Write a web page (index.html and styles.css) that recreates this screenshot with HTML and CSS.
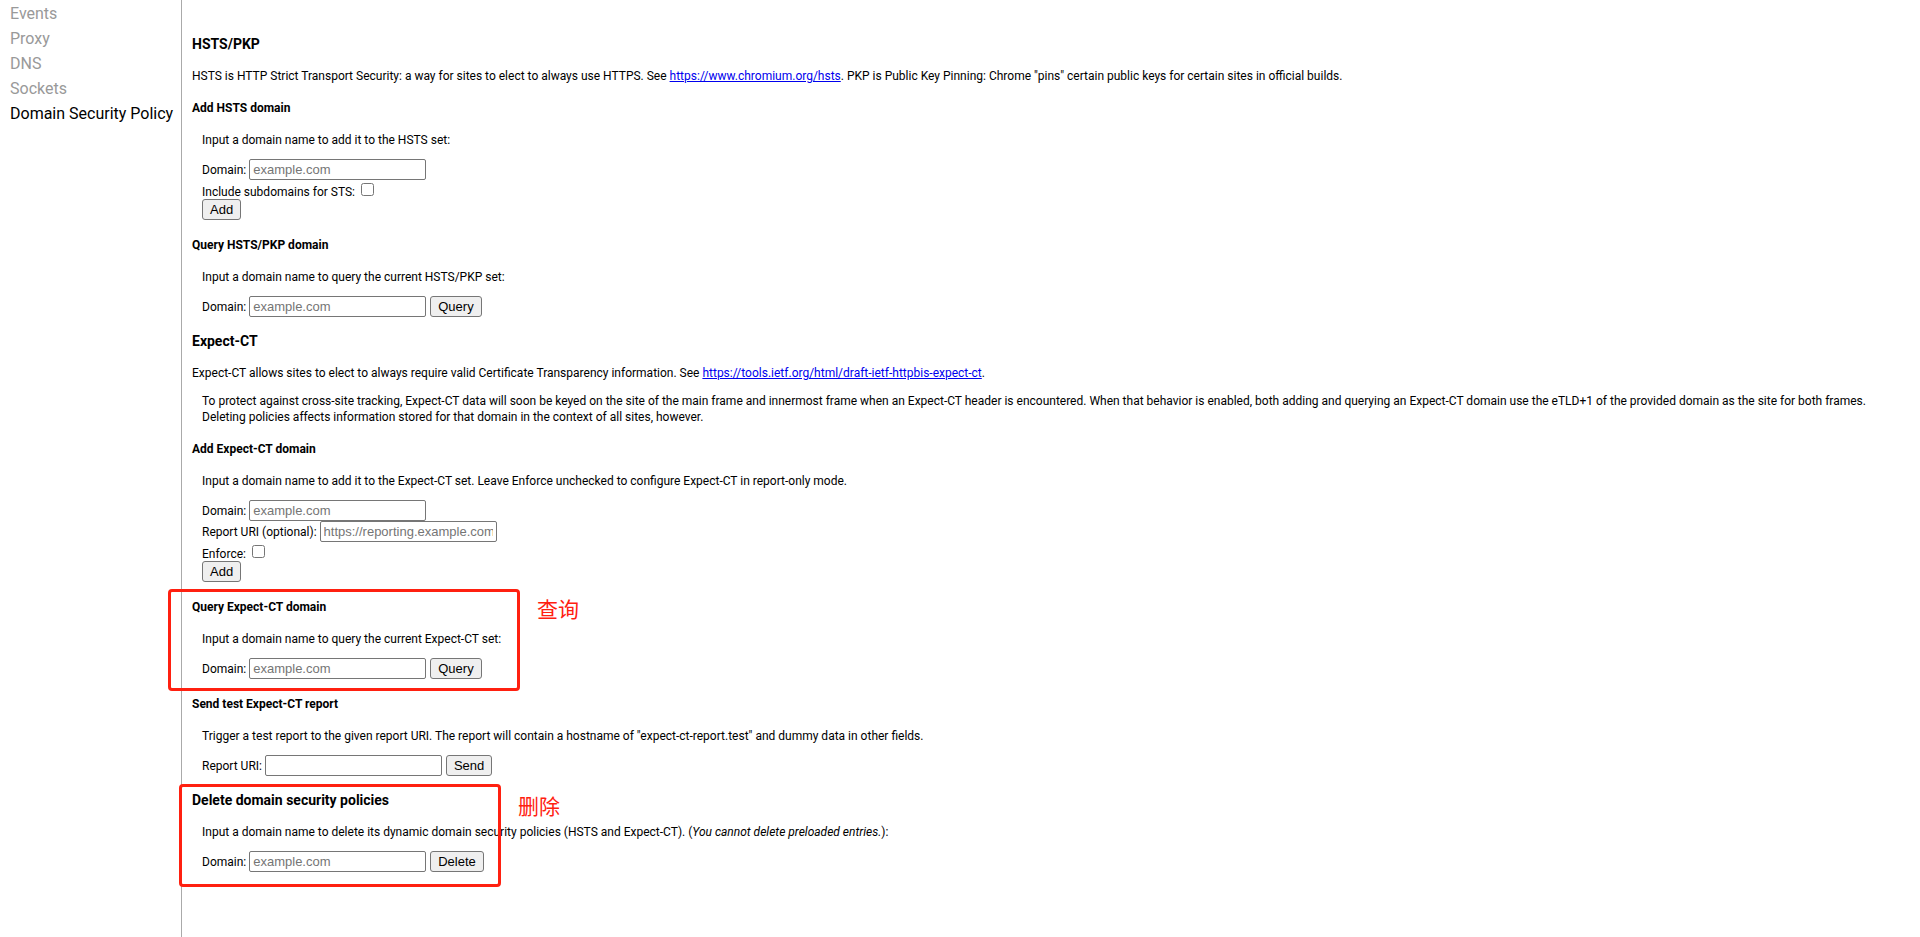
FILE: index.html
```html
<!DOCTYPE html>
<html lang="en">
<head>
    <meta charset="UTF-8">
    <meta name="viewport" content="width=device-width, initial-scale=1.0">
    <title>Domain Security Policy</title>
    <link rel="stylesheet" href="styles.css">
</head>
<body>

    <nav class="tabs">
        <a href="#events">Events</a>
        <a href="#proxy">Proxy</a>
        <a href="#dns">DNS</a>
        <a href="#sockets">Sockets</a>
        <a href="#hsts" class="selected">Domain Security Policy</a>
    </nav>

    <main class="content">
        <h3>HSTS/PKP</h3>
        <p>HSTS is HTTP Strict Transport Security: a way for sites to elect to always use HTTPS. See <a href="https://www.chromium.org/hsts">https://www.chromium.org/hsts</a>. PKP is Public Key Pinning: Chrome "pins" certain public keys for certain sites in official builds.</p>

        <section>
            <h4>Add HSTS domain</h4>
            <form>
                <p>Input a domain name to add it to the HSTS set:</p>
                <div class="row">
                    <label for="add-domain">Domain:</label>
                    <input type="text" id="add-domain" placeholder="example.com">
                </div>
                <div class="row check-row">
                    <label for="add-sub">Include subdomains for STS:</label>
                    <input type="checkbox" id="add-sub">
                </div>
                <div class="row">
                    <button type="submit">Add</button>
                </div>
            </form>
        </section>

        <section>
            <h4>Query HSTS/PKP domain</h4>
            <form>
                <p>Input a domain name to query the current HSTS/PKP set:</p>
                <div class="row">
                    <label for="query-domain">Domain:</label>
                    <input type="text" id="query-domain" placeholder="example.com">
                    <button type="submit">Query</button>
                </div>
            </form>
        </section>

        <h3>Expect-CT</h3>
        <p>Expect-CT allows sites to elect to always require valid Certificate Transparency information. See <a href="https://tools.ietf.org/html/draft-ietf-httpbis-expect-ct">https://tools.ietf.org/html/draft-ietf-httpbis-expect-ct</a>.</p>
        <p class="note">To protect against cross-site tracking, Expect-CT data will soon be keyed on the site of the main frame and innermost frame when an Expect-CT header is encountered. When that behavior is enabled, both adding and querying an Expect-CT domain use the eTLD+1 of the provided domain as the site for both frames. Deleting policies affects information stored for that domain in the context of all sites, however.</p>

        <section>
            <h4>Add Expect-CT domain</h4>
            <form>
                <p>Input a domain name to add it to the Expect-CT set. Leave Enforce unchecked to configure Expect-CT in report-only mode.</p>
                <div class="row">
                    <label for="ct-domain">Domain:</label>
                    <input type="text" id="ct-domain" placeholder="example.com">
                </div>
                <div class="row">
                    <label for="ct-report">Report URI (optional):</label>
                    <input type="text" id="ct-report" placeholder="https://reporting.example.com">
                </div>
                <div class="row check-row">
                    <label for="ct-enforce">Enforce:</label>
                    <input type="checkbox" id="ct-enforce">
                </div>
                <div class="row">
                    <button type="submit">Add</button>
                </div>
            </form>
        </section>

        <section class="marked">
            <h4>Query Expect-CT domain</h4>
            <form>
                <p>Input a domain name to query the current Expect-CT set:</p>
                <div class="row">
                    <label for="ct-query">Domain:</label>
                    <input type="text" id="ct-query" placeholder="example.com">
                    <button type="submit">Query</button>
                </div>
            </form>
            <div class="mark mark-query"><span class="mark-text" lang="zh">查询</span></div>
        </section>

        <section>
            <h4>Send test Expect-CT report</h4>
            <form>
                <p>Trigger a test report to the given report URI. The report will contain a hostname of "expect-ct-report.test" and dummy data in other fields.</p>
                <div class="row">
                    <label for="test-report">Report URI:</label>
                    <input type="text" id="test-report">
                    <button type="submit">Send</button>
                </div>
            </form>
        </section>

        <section class="marked">
            <h3>Delete domain security policies</h3>
            <form>
                <p>Input a domain name to delete its dynamic domain security policies (HSTS and Expect-CT). (<em>You cannot delete preloaded entries.</em>):</p>
                <div class="row">
                    <label for="delete-domain">Domain:</label>
                    <input type="text" id="delete-domain" placeholder="example.com">
                    <button type="submit">Delete</button>
                </div>
            </form>
            <div class="mark mark-delete"><span class="mark-text" lang="zh">删除</span></div>
        </section>
    </main>

</body>
</html>
```
FILE: styles.css
```css
* {
    box-sizing: border-box;
}

body {
    margin: 0;
    min-height: 100vh;
    display: flex;
    font-family: "Segoe UI", Roboto, sans-serif;
    font-size: 12px;
    line-height: 16px;
    color: #000;
    background-color: #fff;
}

/* Tab list on the left */
.tabs {
    flex: none;
    width: 182px;
    display: flex;
    flex-direction: column;
    padding: 1px 10px;
    border-right: 1px solid #aaa;
}

.tabs a {
    font-size: 16px;
    line-height: 25px;
    color: #999;
    text-decoration: none;
    white-space: nowrap;
}

.tabs a.selected {
    color: #000;
}

/* Policy page */
.content {
    flex: 1;
    min-width: 0;
    padding: 21px 10px;
}

h3 {
    font-size: 14px;
    line-height: 19px;
    margin: 14px 0;
}

h4 {
    font-size: 12px;
    margin: 16px 0;
}

p {
    margin: 12px 0;
}

.content a {
    color: #00e;
}

.note {
    margin-left: 10px;
}

form {
    padding: 0 0 1px 10px;
}

form p {
    margin: 0 0 11px;
}

.row {
    display: flex;
    align-items: center;
    gap: 3px;
}

.row button {
    margin-left: 1px;
}

.row button:first-child {
    margin-left: 0;
}

input,
button {
    font-family: Arial, "Liberation Sans", sans-serif;
    font-size: 13px;
    height: 21px;
    margin: 0;
}

input[type="text"] {
    width: 177px;
    padding: 1px 3px;
    border: 1px solid #767676;
    border-radius: 2px;
}

input::placeholder {
    color: #757575;
}

button {
    padding: 0 7px;
    color: #000;
    background-color: #efefef;
    border: 1px solid #767676;
    border-radius: 3px;
}

.check-row {
    height: 19px;
    gap: 6px;
    align-items: flex-start;
}

.check-row label {
    line-height: 24px;
}

.check-row input {
    width: 13px;
    height: 13px;
    margin-top: 3px;
}

/* Red frames drawn over the page */
.marked {
    position: relative;
}

.mark {
    position: absolute;
    border: 3px solid #ff2010;
    border-radius: 4px;
    pointer-events: none;
}

.mark-query {
    top: -10px;
    left: -24px;
    width: 352px;
    height: 102px;
}

.mark-delete {
    top: -7px;
    left: -13px;
    width: 322px;
    height: 103px;
}

.mark-text {
    position: absolute;
    top: 4px;
    left: 100%;
    margin-left: 20px;
    font-family: "Microsoft YaHei", "Noto Sans CJK SC", sans-serif;
    font-size: 21px;
    line-height: 28px;
    color: #ff2010;
    white-space: nowrap;
}

.mark-query .mark-text {
    top: 2px;
}
```
